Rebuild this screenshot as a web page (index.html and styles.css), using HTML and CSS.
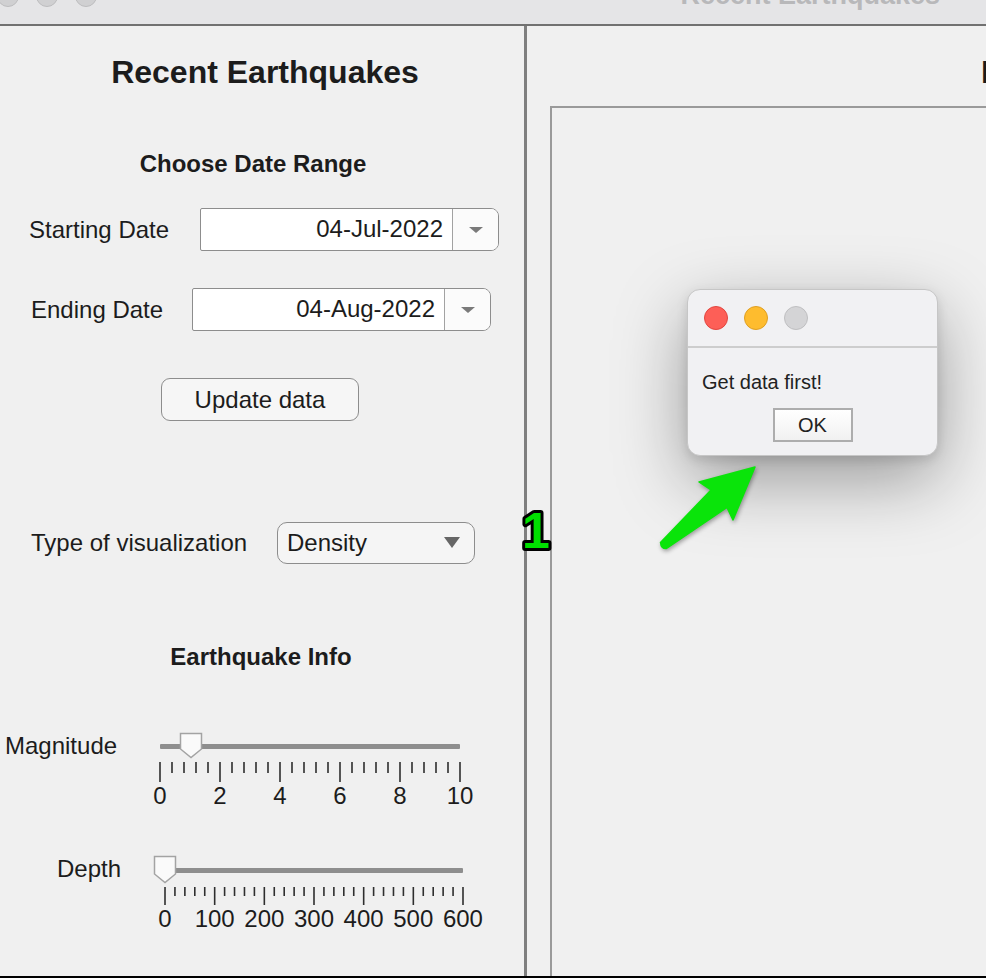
FILE: index.html
```html
<!DOCTYPE html>
<html lang="en">
<head>
  <meta charset="UTF-8">
  <title>Recent Earthquakes</title>
  <link rel="stylesheet" href="styles.css">
</head>
<body>
  <div class="window">
    <!-- Window chrome -->
    <div class="titlebar">
      <div class="lights"><span></span><span></span><span></span></div>
      <div class="window-title">Recent Earthquakes</div>
    </div>

    <div class="main">
      <!-- Controls panel -->
      <div class="left-panel">
        <h1 class="panel-title">Recent Earthquakes</h1>

        <h2 class="section-title date-title">Choose Date Range</h2>

        <div class="field-row start-row">
          <label class="field-label">Starting Date</label>
          <div class="datepicker">
            <span class="date-value">04-Jul-2022</span>
            <span class="date-btn"><i class="caret"></i></span>
          </div>
        </div>

        <div class="field-row end-row">
          <label class="field-label">Ending Date</label>
          <div class="datepicker">
            <span class="date-value">04-Aug-2022</span>
            <span class="date-btn"><i class="caret"></i></span>
          </div>
        </div>

        <div class="button-row">
          <button class="update-button">Update data</button>
        </div>

        <div class="field-row type-row">
          <label class="field-label">Type of visualization</label>
          <div class="dropdown">
            <span>Density</span>
            <i class="dropdown-arrow"></i>
          </div>
        </div>

        <h2 class="section-title info-title">Earthquake Info</h2>

        <div class="slider-row mag-row">
          <span class="slider-label">Magnitude</span>
          <svg class="slider" id="magSlider" width="340" height="53">
            <rect class="track" x="20" y="14" width="300" height="5" rx="1"/>
            <g class="ticks"></g>
            <path class="thumb" d="M40.5 3.5 H61.5 V19 L51 27.5 L40.5 19 Z"/>
          </svg>
        </div>
        <div class="tick-labels mag-labels">
          <span>0</span><span>2</span><span>4</span><span>6</span><span>8</span><span>10</span>
        </div>

        <div class="slider-row depth-row">
          <span class="slider-label">Depth</span>
          <svg class="slider" id="depthSlider" width="340" height="53">
            <rect class="track" x="25" y="15" width="298" height="5" rx="1"/>
            <g class="ticks"></g>
            <path class="thumb" d="M14.5 3.5 H35.5 V21 L25 29.5 L14.5 21 Z"/>
          </svg>
        </div>
        <div class="tick-labels depth-labels">
          <span>0</span><span>100</span><span>200</span><span>300</span><span>400</span><span>500</span><span>600</span>
        </div>
      </div>

      <div class="divider"></div>

      <!-- Map panel -->
      <div class="right-panel">
        <h1 class="map-title">Map of Earthquakes</h1>
        <div class="axes"></div>
      </div>
    </div>

    <!-- Alert dialog -->
    <div class="alert">
      <div class="alert-bar">
        <span class="dot red"></span>
        <span class="dot yellow"></span>
        <span class="dot grey"></span>
      </div>
      <div class="alert-body">
        <p class="alert-text">Get data first!</p>
        <button class="ok-button">OK</button>
      </div>
    </div>

    <!-- Annotations -->
    <svg class="arrow" width="120" height="110" viewBox="650 450 120 110">
      <path d="M660.5 542.5 L711 490 L699 482 L755 467 L733 520 L727 507.5 L666.5 548.5 Q661 549 660.5 542.5 Z"/>
    </svg>
    <svg class="callout" width="40" height="56">
      <text x="5" y="48">1</text>
    </svg>
  </div>

  <script>
    function drawTicks(id, x0, step, count, every, top, majorBottom, minorBottom) {
      const group = document.querySelector('#' + id + ' .ticks');
      let markup = '';
      for (let i = 0; i <= count; i++) {
        const x = (x0 + i * step).toFixed(2);
        const bottom = i % every === 0 ? majorBottom : minorBottom;
        markup += '<line x1="' + x + '" y1="' + top + '" x2="' + x + '" y2="' + bottom + '"/>';
      }
      group.innerHTML = markup;
    }

    drawTicks('magSlider', 20, 12, 25, 5, 32, 52, 43);
    drawTicks('depthSlider', 25, 298 / 30, 30, 5, 34, 52, 43);
  </script>
</body>
</html>
```

FILE: styles.css
```css
body {
  margin: 0;
  background: #000;
  font-family: "Liberation Sans", Arial, sans-serif;
  color: #1c1c1c;
  height: 978px;
  overflow: hidden;
}

.window {
  position: relative;
  height: 976px;
  background: #f0f0f0;
  overflow: hidden;
}

/* title bar */
.titlebar {
  display: flex;
  align-items: flex-start;
  height: 24px;
  background: #e5e5e7;
  border-bottom: 2px solid #717171;
  overflow: hidden;
}
.lights {
  display: flex;
  gap: 17px;
  margin: -15px 0 0 -3px;
}
.lights span {
  width: 20px;
  height: 20px;
  border-radius: 50%;
  background: #d0d0d2;
  border: 1px solid #bdbdbf;
}
.window-title {
  margin: -18px 46px 0 auto;
  font-size: 27px;
  line-height: 27px;
  font-weight: bold;
  color: #b8b8ba;
}

.main {
  display: flex;
  height: 950px;
}

/* left panel */
.left-panel {
  width: 524px;
  flex-shrink: 0;
}
.panel-title {
  margin: 26px 0 0;
  height: 40px;
  line-height: 40px;
  font-size: 32px;
  text-align: center;
  padding-left: 6px;
}
.section-title {
  margin: 0;
  height: 30px;
  line-height: 30px;
  font-size: 24px;
  text-align: center;
}
.date-title { margin-top: 57px; padding-right: 18px; }
.info-title { margin-top: 78px; padding-right: 2px; }

.field-row {
  display: flex;
  align-items: center;
  height: 43px;
  font-size: 24px;
}
.start-row { margin-top: 29px; padding-left: 29px; }
.start-row .field-label { width: 171px; }
.end-row { margin-top: 37px; padding-left: 31px; }
.end-row .field-label { width: 161px; }
.type-row { margin-top: 100px; padding-left: 31px; }
.type-row .field-label { width: 246px; }

.datepicker {
  display: flex;
  width: 299px;
  height: 43px;
  box-sizing: border-box;
  border: 1.5px solid #8d8d8d;
  border-radius: 2px 8px 8px 2px;
  background: #fff;
}
.date-value {
  flex: 1;
  text-align: right;
  padding-right: 9px;
  line-height: 40px;
}
.date-btn {
  width: 45px;
  border-left: 1.5px solid #a2a2a2;
  display: flex;
  align-items: center;
  justify-content: center;
  background: #fbfbfb;
  border-radius: 0 7px 7px 0;
}
.caret {
  width: 0;
  height: 0;
  border-left: 7px solid transparent;
  border-right: 7px solid transparent;
  border-top: 6px solid #7a7a7a;
}

.button-row {
  margin-top: 47px;
  padding-left: 161px;
}
.update-button {
  width: 198px;
  height: 43px;
  font-family: inherit;
  font-size: 24px;
  color: #1c1c1c;
  background: #f6f6f6;
  border: 1.5px solid #8d8d8d;
  border-radius: 9px;
  padding: 0;
}

.dropdown {
  display: flex;
  align-items: center;
  justify-content: space-between;
  width: 198px;
  height: 42px;
  box-sizing: border-box;
  padding: 0 14px 0 9px;
  border: 1.5px solid #8d8d8d;
  border-radius: 10px;
  background: #f5f5f5;
}
.dropdown-arrow {
  width: 0;
  height: 0;
  border-left: 8px solid transparent;
  border-right: 8px solid transparent;
  border-top: 11px solid #666;
}

/* sliders */
.slider-row {
  display: flex;
  align-items: flex-start;
  height: 53px;
}
.mag-row { margin-top: 58px; }
.depth-row { margin-top: 44px; }
.slider-label {
  width: 140px;
  box-sizing: border-box;
  font-size: 24px;
  line-height: 32px;
}
.mag-row .slider-label { padding-left: 5px; }
.depth-row .slider-label { padding-left: 57px; }
.slider .track { fill: #8e8e8e; }
.slider .ticks line { stroke: #2e2e2e; stroke-width: 1.6; }
.slider .thumb { fill: #fafafa; stroke: #a3a3a3; stroke-width: 1.5; }

.tick-labels {
  display: flex;
  height: 26px;
  line-height: 26px;
  font-size: 24px;
}
.tick-labels span { text-align: center; flex-shrink: 0; }
.mag-labels { padding-left: 130px; }
.mag-labels span { width: 60px; }
.depth-labels { padding-left: 140.2px; }
.depth-labels span { width: 49.67px; }

.divider {
  width: 3px;
  flex-shrink: 0;
  background: #7f7f7f;
}

/* right panel */
.right-panel {
  flex: 1;
  display: flex;
  flex-direction: column;
  overflow: hidden;
}
.map-title {
  margin: 26px 0 0;
  height: 40px;
  line-height: 40px;
  font-size: 32px;
  padding-left: 454px;
  white-space: nowrap;
}
.axes {
  margin: 14px 0 -20px 23px;
  width: 600px;
  flex: 1;
  border: 2px solid #9a9a9a;
}

/* alert dialog */
.alert {
  position: absolute;
  left: 687px;
  top: 289px;
  width: 251px;
  height: 167px;
  box-sizing: border-box;
  background: #f1f1f3;
  border: 1px solid #c6c6c6;
  border-radius: 13px;
  box-shadow: 0 24px 70px rgba(0, 0, 0, 0.36), 0 4px 12px rgba(0, 0, 0, 0.12);
}
.alert-bar {
  display: flex;
  align-items: center;
  gap: 16px;
  height: 56px;
  padding-left: 16px;
  border-bottom: 2px solid #cdcdcd;
}
.dot {
  width: 22px;
  height: 22px;
  border-radius: 50%;
}
.dot.red { background: #fd5f57; border: 1px solid #e2463f; }
.dot.yellow { background: #febc2e; border: 1px solid #df9f22; }
.dot.grey { background: #d4d4d6; border: 1px solid #bfbfc1; }
.alert-body {
  display: flex;
  flex-direction: column;
  align-items: center;
}
.alert-text {
  align-self: flex-start;
  margin: 22px 0 0 14px;
  font-size: 20px;
  line-height: 24px;
  color: #222;
}
.ok-button {
  margin-top: 14px;
  width: 80px;
  height: 34px;
  padding: 0;
  font-family: inherit;
  font-size: 20px;
  color: #222;
  background: linear-gradient(#ffffff, #f1f1f1);
  border: 2px solid #adadad;
  border-radius: 0;
}

/* annotations */
.arrow {
  position: absolute;
  left: 650px;
  top: 450px;
  filter: drop-shadow(1px 2px 2px rgba(0, 0, 0, 0.35));
}
.arrow path {
  fill: #0ae40a;
  stroke: #0ae40a;
  stroke-width: 1.5;
  stroke-linejoin: round;
}
.callout {
  position: absolute;
  left: 517px;
  top: 500px;
}
.callout text {
  font-family: "Liberation Sans", Arial, sans-serif;
  font-weight: bold;
  font-size: 50px;
  fill: #00e000;
  stroke: #000;
  stroke-width: 6px;
  stroke-linejoin: round;
  paint-order: stroke;
}
```
